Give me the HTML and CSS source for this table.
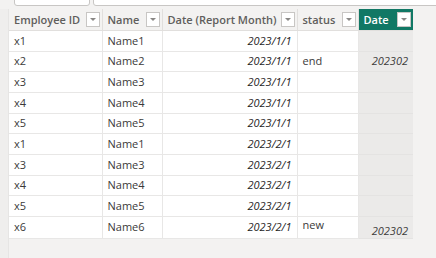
FILE: index.html
```html
<!DOCTYPE html>
<html>
<head>
<meta charset="utf-8">
<link rel="stylesheet" href="styles.css">
</head>
<body>
<div class="topbar">
  <div class="box box-a"></div>
  <div class="box box-b"></div>
</div>
<div class="main">
  <div class="gutter"></div>
  <table class="grid">
    <colgroup>
      <col class="c1"><col class="c2"><col class="c3"><col class="c4"><col class="c5">
    </colgroup>
    <thead>
      <tr>
        <th><div class="hd"><span>Employee ID</span><span class="flt"></span></div></th>
        <th><div class="hd"><span>Name</span><span class="flt"></span></div></th>
        <th><div class="hd"><span>Date (Report Month)</span><span class="flt"></span></div></th>
        <th><div class="hd"><span>status</span><span class="flt"></span></div></th>
        <th class="sel"><div class="hd"><span>Date</span><span class="flt"></span></div></th>
      </tr>
    </thead>
    <tbody>
      <tr><td>x1</td><td>Name1</td><td class="dt">2023/1/1</td><td></td><td class="calc"></td></tr>
      <tr><td>x2</td><td>Name2</td><td class="dt">2023/1/1</td><td>end</td><td class="calc">202302</td></tr>
      <tr><td>x3</td><td>Name3</td><td class="dt">2023/1/1</td><td></td><td class="calc"></td></tr>
      <tr><td>x4</td><td>Name4</td><td class="dt">2023/1/1</td><td></td><td class="calc"></td></tr>
      <tr><td>x5</td><td>Name5</td><td class="dt">2023/1/1</td><td></td><td class="calc"></td></tr>
      <tr><td>x1</td><td>Name1</td><td class="dt">2023/2/1</td><td></td><td class="calc"></td></tr>
      <tr><td>x3</td><td>Name3</td><td class="dt">2023/2/1</td><td></td><td class="calc"></td></tr>
      <tr><td>x4</td><td>Name4</td><td class="dt">2023/2/1</td><td></td><td class="calc"></td></tr>
      <tr><td>x5</td><td>Name5</td><td class="dt">2023/2/1</td><td></td><td class="calc"></td></tr>
      <tr><td>x6</td><td>Name6</td><td class="dt">2023/2/1</td><td class="up">new</td><td class="calc down">202302</td></tr>
    </tbody>
  </table>
</div>
</body>
</html>
```
FILE: styles.css
```css
html, body {
  margin: 0;
  padding: 0;
}
body {
  width: 436px;
  height: 258px;
  overflow: hidden;
  background: #f3f2f1;
  font-family: "Open Sans", "Noto Sans", sans-serif;
  color: #252423;
}
.topbar {
  height: 9px;
  position: relative;
  overflow: hidden;
}
.box {
  position: absolute;
  top: -6px;
  height: 10px;
  background: #ffffff;
  border: 1px solid #c8c6c4;
  border-radius: 3px;
}
.box-a { left: 14px; width: 74px; }
.box-b { left: 93px; width: 360px; }
.main {
  display: flex;
  align-items: flex-start;
}
.gutter {
  width: 9px;
  height: 249px;
  background: #efeeed;
  border-right: 1px solid #e6e5e4;
  box-sizing: border-box;
}
.grid {
  border-collapse: collapse;
  table-layout: fixed;
  width: 404px;
  font-size: 11px;
  line-height: 14px;
}
.c1 { width: 93px; }
.c2 { width: 60px; }
.c3 { width: 135px; }
.c4 { width: 61px; }
.c5 { width: 55px; }
th {
  height: 21px;
  padding: 0;
  background: #f3f2f1;
  text-align: left;
  font-weight: 600;
  color: #605e5c;
  border-right: 1px solid #e1dfdd;
  border-bottom: 1px solid #e1dfdd;
}
th.sel {
  background: #117865;
  color: #ffffff;
  border-right: none;
}
.hd {
  display: flex;
  align-items: center;
  justify-content: space-between;
  padding: 0 2px 0 5px;
  height: 20px;
}
.flt {
  width: 14px;
  height: 15px;
  background: #ffffff;
  border: 1px solid #c8c6c4;
  display: flex;
  align-items: center;
  justify-content: center;
  box-sizing: border-box;
}
.flt::after {
  content: "";
  border-left: 3px solid transparent;
  border-right: 3px solid transparent;
  border-top: 3px solid #8a8886;
}
td {
  height: 19.67px;
  padding: 0 5px;
  background: #ffffff;
  border-right: 1px solid #e8e7e6;
  border-bottom: 1px solid #e8e7e6;
  white-space: nowrap;
  color: #3b3a39;
}
td.dt {
  text-align: right;
  font-style: italic;
  color: #252423;
}
td.calc {
  background: #ebeae9;
  text-align: right;
  font-style: italic;
  border-right: none;
  border-bottom: 1px solid #e4e3e2;
  color: #3b3a39;
}
td.up {
  vertical-align: top;
  padding-top: 1px;
}
td.down {
  vertical-align: bottom;
  padding-bottom: 0;
}
```
